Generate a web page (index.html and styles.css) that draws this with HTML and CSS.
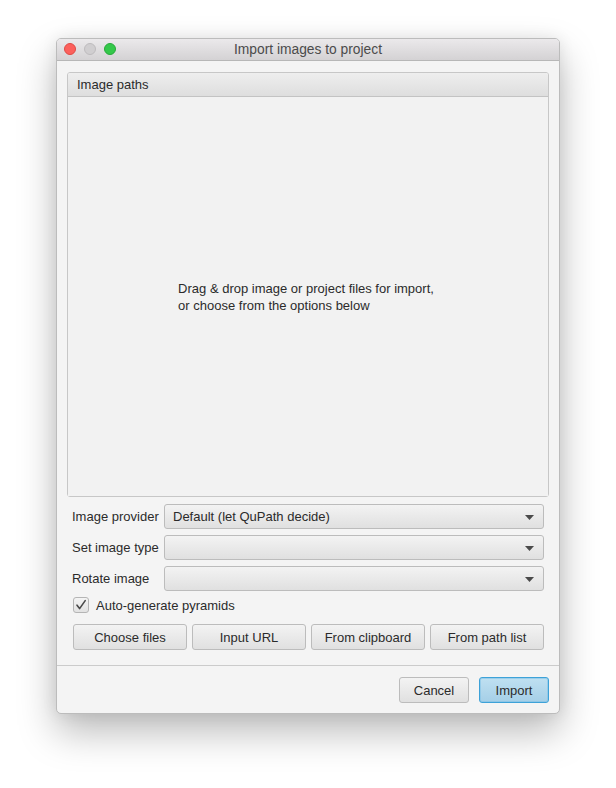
FILE: index.html
```html
<!DOCTYPE html>
<html>
<head>
<meta charset="utf-8">
<title>Import images to project</title>
<link rel="stylesheet" href="styles.css">
</head>
<body>
<div class="window">
  <div class="titlebar">
    <div class="lights">
      <span class="light red"></span>
      <span class="light gray"></span>
      <span class="light green"></span>
    </div>
    <div class="title">Import images to project</div>
  </div>
  <div class="content">
    <div class="pane">
      <div class="pane-header">Image paths</div>
      <div class="pane-body">
        <div class="drop-text">Drag &amp; drop image or project files for import,<br>or choose from the options below</div>
      </div>
    </div>
    <div class="form">
      <div class="row">
        <div class="label">Image provider</div>
        <div class="combo"><span class="combo-text">Default (let QuPath decide)</span><svg class="arrow" width="9" height="5" viewBox="0 0 9 5"><path d="M0 0H9L4.5 5Z" fill="#4a4a4a"/></svg></div>
      </div>
      <div class="row">
        <div class="label">Set image type</div>
        <div class="combo"><span class="combo-text"></span><svg class="arrow" width="9" height="5" viewBox="0 0 9 5"><path d="M0 0H9L4.5 5Z" fill="#4a4a4a"/></svg></div>
      </div>
      <div class="row">
        <div class="label">Rotate image</div>
        <div class="combo"><span class="combo-text"></span><svg class="arrow" width="9" height="5" viewBox="0 0 9 5"><path d="M0 0H9L4.5 5Z" fill="#4a4a4a"/></svg></div>
      </div>
      <div class="check-row">
        <span class="checkbox"><svg width="16" height="16" viewBox="0 0 16 16"><path d="M4 8.2L6.6 11.6L12.2 3.6" fill="none" stroke="#4a4a4a" stroke-width="1.6" stroke-linecap="round" stroke-linejoin="round"/></svg></span>
        <span class="check-label">Auto-generate pyramids</span>
      </div>
      <div class="btn-row">
        <button class="btn">Choose files</button>
        <button class="btn">Input URL</button>
        <button class="btn">From clipboard</button>
        <button class="btn">From path list</button>
      </div>
    </div>
  </div>
  <div class="buttonbar">
    <button class="btn dlg">Cancel</button>
    <button class="btn dlg default">Import</button>
  </div>
</div>
</body>
</html>
```
FILE: styles.css
```css
html, body {
  margin: 0;
  padding: 0;
  background: #ffffff;
}
body {
  width: 616px;
  height: 788px;
  font-family: "Liberation Sans", Arial, sans-serif;
  font-size: 13px;
  color: #2b2b2b;
  overflow: hidden;
}
.window {
  margin: 38px 0 0 56px;
  width: 504px;
  height: 676px;
  box-sizing: border-box;
  border: 1px solid #bcbcbc;
  border-radius: 5px;
  background: #f4f4f4;
  box-shadow: 0 18px 38px rgba(0, 0, 0, 0.27), 0 0 16px rgba(0, 0, 0, 0.08);
  display: flex;
  flex-direction: column;
  overflow: hidden;
}
.titlebar {
  height: 21px;
  flex: none;
  position: relative;
  background: linear-gradient(#ebe9eb, #d4d2d4);
  border-bottom: 1px solid #b7b7b7;
  display: flex;
  align-items: center;
  justify-content: center;
}
.lights {
  position: absolute;
  left: 7px;
  top: 4px;
  display: flex;
  gap: 8px;
}
.light {
  width: 12px;
  height: 12px;
  border-radius: 50%;
  box-sizing: border-box;
}
.light.red {
  background: #fc605c;
  border: 1px solid #de4a45;
}
.light.gray {
  background: #d0ced0;
  border: 1px solid #bdbbbd;
}
.light.green {
  background: #34c84a;
  border: 1px solid #27a93a;
}
.title {
  color: #4b4b4b;
  font-size: 13.8px;
  line-height: 21px;
}
.content {
  flex: 1;
  padding: 11px 10px 0 10px;
  display: flex;
  flex-direction: column;
}
.pane {
  height: 425px;
  box-sizing: border-box;
  border: 1px solid #c7c7c7;
  border-radius: 3px;
  display: flex;
  flex-direction: column;
  flex: none;
}
.pane-header {
  height: 24px;
  box-sizing: border-box;
  border-bottom: 1px solid #c3c3c3;
  background: linear-gradient(#eeeeee, #dedede);
  padding-left: 9px;
  line-height: 23px;
  color: #2b2b2b;
  border-radius: 2px 2px 0 0;
}
.pane-body {
  flex: 1;
  background: #f2f2f2;
  display: flex;
  align-items: center;
  justify-content: center;
}
.drop-text {
  line-height: 17px;
  text-align: left;
  color: #2b2b2b;
  padding: 1px 4px 0 0;
}
.form {
  padding: 7px 5px 0 5px;
}
.row {
  display: flex;
  align-items: center;
  height: 25px;
  margin-bottom: 6px;
}
.label {
  width: 92px;
  flex: none;
}
.combo {
  flex: 1;
  height: 25px;
  box-sizing: border-box;
  border: 1px solid #bcbcbc;
  border-radius: 3px;
  background: linear-gradient(#f3f3f3, #e0e0e0);
  display: flex;
  align-items: center;
  padding: 0 9px 0 8px;
}
.combo-text {
  flex: 1;
}
.arrow {
  flex: none;
  margin-top: 1px;
}
.check-row {
  display: flex;
  align-items: center;
  height: 16px;
  margin-top: 1px;
  padding-left: 1px;
}
.checkbox {
  width: 16px;
  height: 16px;
  box-sizing: border-box;
  border: 1px solid #b5b5b5;
  border-radius: 3px;
  background: linear-gradient(#f4f4f4, #e2e2e2);
  display: flex;
  align-items: center;
  justify-content: center;
}
.checkbox svg {
  display: block;
  flex: none;
}
.check-label {
  margin-left: 7px;
}
.btn-row {
  display: flex;
  gap: 5px;
  margin-top: 11px;
  padding-left: 1px;
}
.btn {
  height: 26px;
  box-sizing: border-box;
  border: 1px solid #bcbcbc;
  border-radius: 3px;
  background: linear-gradient(#f3f3f3, #e0e0e0);
  font-family: "Liberation Sans", Arial, sans-serif;
  font-size: 13px;
  color: #2b2b2b;
  padding: 1px 0 0 0;
  margin: 0;
}
.btn-row .btn {
  flex: 1;
}
.buttonbar {
  flex: none;
  border-top: 1px solid #cbcbcb;
  padding: 11px 10px 10px 10px;
  display: flex;
  justify-content: flex-end;
  gap: 10px;
}
.dlg {
  width: 70px;
}
.dlg.default {
  background: linear-gradient(#bfe0f1, #a5cfe7);
  border: 1px solid #3da2d8;
  box-shadow: inset 0 0 0 1px rgba(120, 190, 230, 0.5);
}
```
